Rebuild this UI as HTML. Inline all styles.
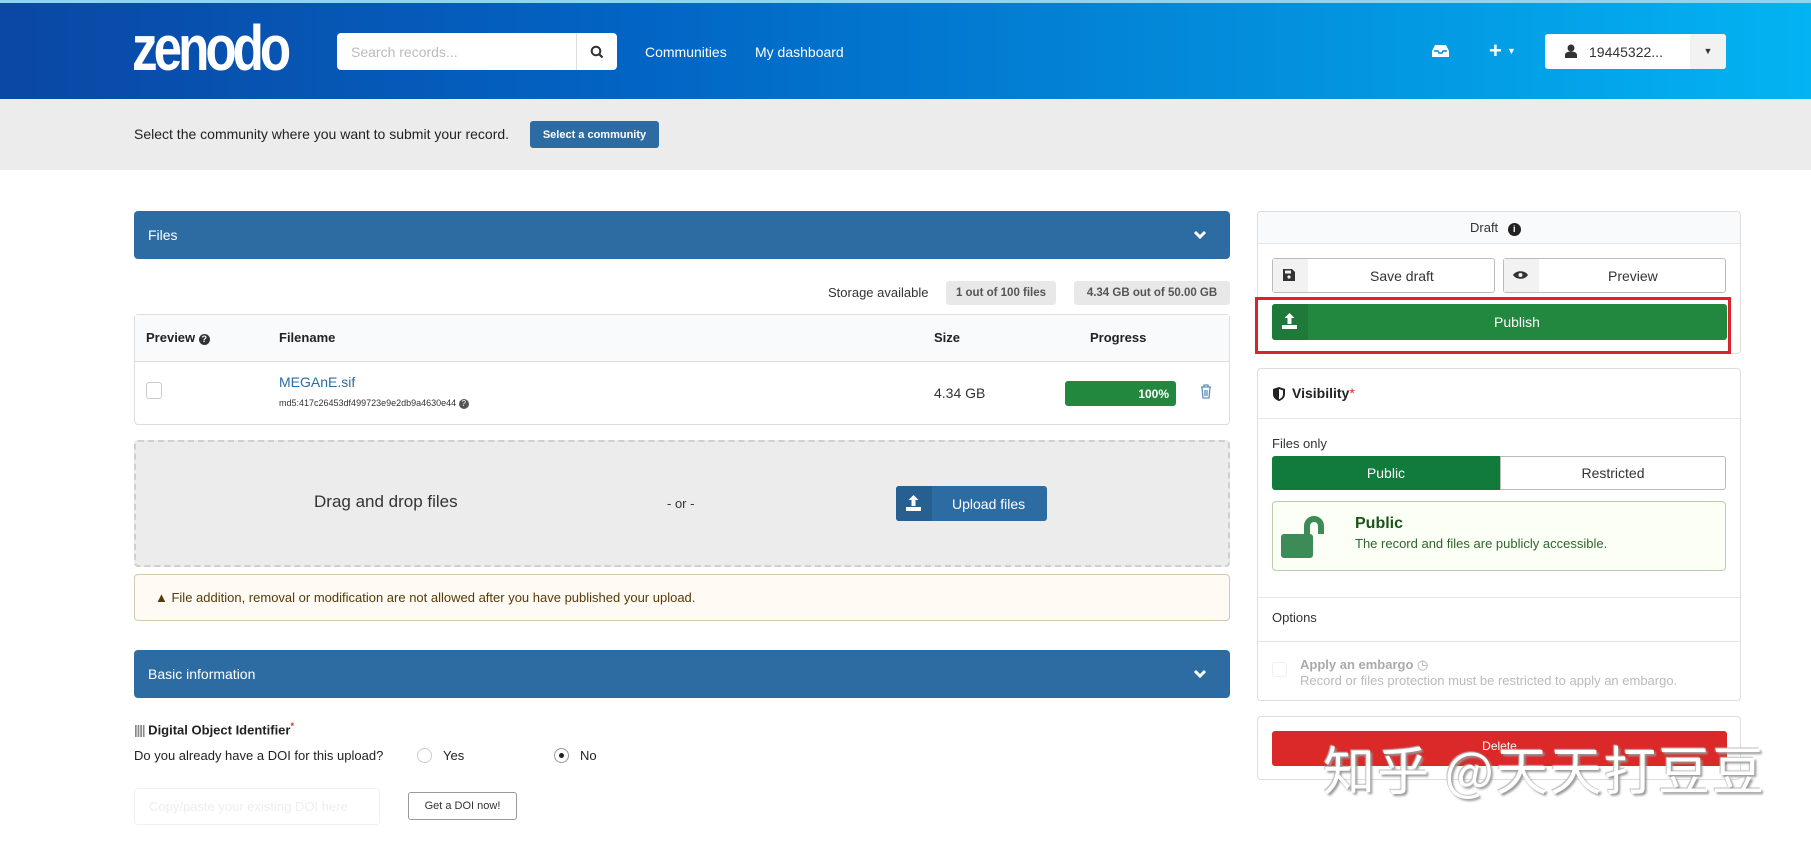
<!DOCTYPE html>
<html><head><meta charset="utf-8"><style>
*{box-sizing:border-box;margin:0;padding:0}
body{width:1811px;height:844px;overflow:hidden;background:#fff;font-family:"Liberation Sans",Arial,sans-serif;color:#222;position:relative;font-size:14px}
.a{position:absolute}
.hdr{left:0;top:0;width:1811px;height:99px;background:linear-gradient(90deg,#0b47a4 0%,#0264c4 35%,#0395e0 75%,#03b3f2 100%);border-top:3px solid #8fd3f5}
.bar{background:#2d6ca3;border-radius:4px;color:#fff;font-size:14px}
.btn{display:flex;align-items:center;justify-content:center}
</style></head><body>
<div class="a hdr"></div>
<div class="a" style="left:132px;top:16px;color:#fff;font-size:64px;font-weight:bold;letter-spacing:-5px;line-height:64px;transform:scaleX(0.8);transform-origin:0 0">zenodo</div>
<div class="a" style="left:337px;top:33px;width:239px;height:37px;background:#fff;border-radius:4px 0 0 4px;color:#bbb;font-size:14px;padding:11px 14px">Search records...</div>
<div class="a btn" style="left:576px;top:33px;width:41px;height:37px;background:#fff;border-left:1px solid #ddd;border-radius:0 4px 4px 0">
<svg width="14" height="14" viewBox="0 0 14 14"><circle cx="6" cy="6" r="4.3" fill="none" stroke="#333" stroke-width="2"/><path d="M9 9l3.5 3.5" stroke="#333" stroke-width="2.2"/></svg></div>
<div class="a" style="left:645px;top:44px;color:#fff;font-size:14px">Communities</div>
<div class="a" style="left:755px;top:44px;color:#fff;font-size:14px">My dashboard</div>
<svg class="a" style="left:1432px;top:44px" width="17" height="14" viewBox="0 0 17 14"><path d="M3 1h11l3 6v6H0V7z" fill="#fff"/><path d="M2 7h4l1 2h3l1-2h4" stroke="#0a86d6" stroke-width="1.4" fill="none"/></svg>
<div class="a" style="left:1489px;top:38px;color:#fff;font-size:22px;font-weight:bold">+</div>
<div class="a" style="left:1507px;top:46px;color:#fff;font-size:9px">▼</div>
<div class="a" style="left:1545px;top:34px;width:181px;height:35px;background:#fff;border-radius:3px"></div>
<div class="a" style="left:1690px;top:34px;width:36px;height:35px;background:#f2f2f2;border-radius:0 3px 3px 0;color:#333;font-size:9px;text-align:center;line-height:35px">▼</div>
<svg class="a" style="left:1565px;top:44px" width="12" height="14" viewBox="0 0 12 14"><circle cx="6" cy="4" r="3.5" fill="#333"/><path d="M0 14v-3c0-2 2-3.5 6-3.5s6 1.5 6 3.5v3z" fill="#333"/></svg>
<div class="a" style="left:1589px;top:44px;font-size:14px;color:#333">19445322...</div>

<div class="a" style="left:0;top:99px;width:1811px;height:71px;background:#ececec"></div>
<div class="a" style="left:134px;top:126px;font-size:14px;color:#222">Select the community where you want to submit your record.</div>
<div class="a btn" style="left:530px;top:121px;width:129px;height:27px;background:#2d6ca3;border-radius:3px;color:#fff;font-size:11px;font-weight:bold">Select a community</div>

<div class="a bar" style="left:134px;top:211px;width:1096px;height:48px;padding:16px 14px">Files</div>
<svg class="a" style="left:1193px;top:229px" width="14" height="12" viewBox="0 0 14 12"><path d="M2 3l5 5 5-5" stroke="#fff" stroke-width="3" fill="none"/></svg>
<div class="a" style="left:828px;top:285px;font-size:13px;color:#333">Storage available</div>
<div class="a btn" style="left:946px;top:281px;width:110px;height:24px;background:#e8e8e8;border-radius:3px;font-size:11.5px;color:#555;font-weight:bold">1 out of 100 files</div>
<div class="a btn" style="left:1074px;top:281px;width:156px;height:24px;background:#e8e8e8;border-radius:3px;font-size:11.5px;color:#555;font-weight:bold">4.34 GB out of 50.00 GB</div>

<div class="a" style="left:134px;top:314px;width:1096px;height:111px;border:1px solid #ddd;border-radius:4px"></div>
<div class="a" style="left:135px;top:315px;width:1094px;height:47px;background:#f9fafb;border-bottom:1px solid #ddd"></div>
<div class="a" style="left:146px;top:330px;font-weight:bold;font-size:13px">Preview <span style="display:inline-block;width:11px;height:11px;border-radius:50%;background:#333;color:#fff;font-size:9px;text-align:center;line-height:11px">?</span></div>
<div class="a" style="left:279px;top:330px;font-weight:bold;font-size:13px">Filename</div>
<div class="a" style="left:934px;top:330px;font-weight:bold;font-size:13px">Size</div>
<div class="a" style="left:1090px;top:330px;font-weight:bold;font-size:13px">Progress</div>
<div class="a" style="left:146px;top:382px;width:16px;height:17px;border:1px solid #ccc;border-radius:3px"></div>
<div class="a" style="left:279px;top:374px;font-size:14px;color:#2d6ca3">MEGAnE.sif</div>
<div class="a" style="left:279px;top:398px;font-size:9px;color:#333">md5:417c26453df499723e9e2db9a4630e44 <span style="display:inline-block;width:10px;height:10px;border-radius:50%;background:#555;color:#fff;font-size:8px;text-align:center;line-height:10px">?</span></div>
<div class="a" style="left:934px;top:385px;font-size:14px;color:#333">4.34 GB</div>
<div class="a" style="left:1065px;top:381px;width:111px;height:25px;background:#21883d;border-radius:3px;color:#fff;font-weight:bold;font-size:12px;text-align:right;padding:6px 7px">100%</div>
<svg class="a" style="left:1200px;top:384px" width="12" height="15" viewBox="0 0 12 15"><path d="M1 3h10M4 3V1h4v2M2 3l1 11h6l1-11M5 6v6M7 6v6" stroke="#5b8fc1" stroke-width="1.3" fill="none"/></svg>

<div class="a" style="left:134px;top:440px;width:1096px;height:127px;background:#ececec;border:2px dashed #cfcfcf;border-radius:4px"></div>
<div class="a" style="left:314px;top:492px;font-size:17px;color:#333">Drag and drop files</div>
<div class="a" style="left:667px;top:496px;font-size:13px;color:#333">- or -</div>
<div class="a" style="left:896px;top:486px;width:151px;height:35px;background:#2d6ca3;border-radius:3px"></div>
<div class="a" style="left:896px;top:486px;width:36px;height:35px;background:#285f91;border-radius:3px 0 0 3px"></div>
<svg class="a" style="left:906px;top:495px" width="15" height="16" viewBox="0 0 15 16"><path d="M7.5 0l5 5H9.5v6h-4V5h-3z M0 12h15v4H0z" fill="#fff"/></svg>
<div class="a" style="left:952px;top:496px;color:#fff;font-size:14px">Upload files</div>

<div class="a" style="left:134px;top:574px;width:1096px;height:47px;background:#fffaf3;border:1px solid #d6c9ad;border-radius:4px"></div>
<div class="a" style="left:155px;top:590px;font-size:13px;color:#573a08">▲ File addition, removal or modification are not allowed after you have published your upload.</div>

<div class="a bar" style="left:134px;top:650px;width:1096px;height:48px;padding:16px 14px">Basic information</div>
<svg class="a" style="left:1193px;top:668px" width="14" height="12" viewBox="0 0 14 12"><path d="M2 3l5 5 5-5" stroke="#fff" stroke-width="3" fill="none"/></svg>
<div class="a" style="left:134px;top:721px;font-size:13px;font-weight:bold;color:#222"><span style="color:#888;letter-spacing:-1px">||||</span> Digital Object Identifier<sup style="color:#db2828;font-size:9px">*</sup></div>
<div class="a" style="left:134px;top:748px;font-size:13px">Do you already have a DOI for this upload?</div>
<div class="a" style="left:417px;top:748px;width:15px;height:15px;border:1px solid #ccc;border-radius:50%"></div>
<div class="a" style="left:443px;top:748px;font-size:13px">Yes</div>
<div class="a" style="left:554px;top:748px;width:15px;height:15px;border:1px solid #999;border-radius:50%"><div style="width:5px;height:5px;background:#222;border-radius:50%;margin:4px"></div></div>
<div class="a" style="left:580px;top:748px;font-size:13px">No</div>
<div class="a" style="left:134px;top:788px;width:246px;height:37px;border:1px solid #f0f0f0;border-radius:4px;color:#eee;font-size:13px;padding:10px 14px">Copy/paste your existing DOI here</div>
<div class="a btn" style="left:408px;top:792px;width:109px;height:28px;border:1px solid #999;border-radius:3px;font-size:11px;color:#333">Get a DOI now!</div>

<!-- right -->
<div class="a" style="left:1257px;top:211px;width:484px;height:143px;border:1px solid #ddd;border-radius:4px"></div>
<div class="a" style="left:1258px;top:212px;width:482px;height:32px;background:#f9fafb;border-bottom:1px solid #e5e5e5;border-radius:4px 4px 0 0"></div>
<div class="a" style="left:1470px;top:220px;font-size:13px;color:#333">Draft <span style="display:inline-block;width:13px;height:13px;border-radius:50%;background:#222;color:#fff;font-size:9px;text-align:center;line-height:13px;font-weight:bold;margin-left:6px">i</span></div>
<div class="a" style="left:1272px;top:258px;width:223px;height:35px;border:1px solid #bbb;border-radius:3px;background:#fff"><div style="position:absolute;left:0;top:0;width:35px;height:33px;background:#f2f2f2"></div></div>
<svg class="a" style="left:1283px;top:269px" width="12" height="12" viewBox="0 0 12 12"><path d="M0 0h9l3 3v9H0z" fill="#333"/><rect x="2" y="1.5" width="6" height="3" fill="#f2f2f2"/><circle cx="6" cy="8" r="1.6" fill="#f2f2f2"/></svg>
<div class="a" style="left:1370px;top:268px;font-size:14px;color:#333">Save draft</div>
<div class="a" style="left:1503px;top:258px;width:223px;height:35px;border:1px solid #bbb;border-radius:3px;background:#fff"><div style="position:absolute;left:0;top:0;width:35px;height:33px;background:#f2f2f2"></div></div>
<svg class="a" style="left:1513px;top:270px" width="15" height="10" viewBox="0 0 15 10"><path d="M0 5C3 0 12 0 15 5 12 10 3 10 0 5z" fill="#333"/><circle cx="7.5" cy="5" r="2" fill="#f2f2f2"/></svg>
<div class="a" style="left:1608px;top:268px;font-size:14px;color:#333">Preview</div>
<div class="a" style="left:1272px;top:304px;width:455px;height:36px;background:#22873f;border-radius:3px"></div>
<div class="a" style="left:1272px;top:304px;width:36px;height:36px;background:#1f7a39;border-radius:3px 0 0 3px"></div>
<svg class="a" style="left:1282px;top:313px" width="15" height="16" viewBox="0 0 15 16"><path d="M7.5 0l5 5H9.5v6h-4V5h-3z M0 12h15v4H0z" fill="#fff"/></svg>
<div class="a" style="left:1494px;top:314px;color:#fff;font-size:14px">Publish</div>
<div class="a" style="left:1255px;top:297px;width:476px;height:57px;border:3px solid #d9232d"></div>

<div class="a" style="left:1257px;top:368px;width:484px;height:333px;border:1px solid #ddd;border-radius:4px"></div>
<svg class="a" style="left:1273px;top:387px" width="12" height="14" viewBox="0 0 12 14"><path d="M6 0l6 2v5c0 4-3 6-6 7-3-1-6-3-6-7V2z" fill="#222"/><path d="M6 2l4 1.5V7c0 3-2 4.5-4 5.2z" fill="#fff"/></svg>
<div class="a" style="left:1292px;top:385px;font-size:14px;font-weight:bold;color:#222">Visibility<span style="color:#db2828;font-weight:normal">*</span></div>
<div class="a" style="left:1258px;top:418px;width:482px;height:1px;background:#e5e5e5"></div>
<div class="a" style="left:1272px;top:436px;font-size:13px;color:#333">Files only</div>
<div class="a btn" style="left:1272px;top:456px;width:228px;height:34px;background:#107b3b;color:#fff;font-size:14px;border-radius:3px 0 0 3px">Public</div>
<div class="a btn" style="left:1500px;top:456px;width:226px;height:34px;border:1px solid #bbb;border-radius:0 3px 3px 0;font-size:14px;color:#333">Restricted</div>
<div class="a" style="left:1272px;top:501px;width:454px;height:70px;background:#fcfff5;border:1px solid #b8d0a8;border-radius:4px"></div>
<svg class="a" style="left:1281px;top:514px" width="46" height="44" viewBox="0 0 46 44"><path d="M26 20V12a7 7 0 0 1 14 0v8" stroke="#3d8b56" stroke-width="6" fill="none"/><rect x="0" y="20" width="32" height="24" rx="3" fill="#3d8b56"/></svg>
<div class="a" style="left:1355px;top:515px;font-size:16px;font-weight:bold;color:#1a531b">Public</div>
<div class="a" style="left:1355px;top:536px;font-size:13px;color:#2c662d">The record and files are publicly accessible.</div>
<div class="a" style="left:1258px;top:597px;width:482px;height:1px;background:#e5e5e5"></div>
<div class="a" style="left:1272px;top:610px;font-size:13px;color:#333">Options</div>
<div class="a" style="left:1258px;top:641px;width:482px;height:1px;background:#e5e5e5"></div>
<div class="a" style="left:1272px;top:662px;width:15px;height:15px;border:1px solid #f0f0f0;border-radius:3px"></div>
<div class="a" style="left:1300px;top:657px;font-size:13px;color:#aaa;font-weight:bold">Apply an embargo <span style="font-weight:normal">◷</span></div>
<div class="a" style="left:1300px;top:673px;font-size:13px;color:#bbb">Record or files protection must be restricted to apply an embargo.</div>

<div class="a" style="left:1257px;top:716px;width:484px;height:64px;border:1px solid #ddd;border-radius:4px"></div>
<div class="a" style="left:1272px;top:731px;width:455px;height:35px;background:#db2828;border-radius:3px;color:#fff;font-size:12px;text-align:center;padding-top:8px">Delete</div>
<div class="a" style="left:1323px;top:730px;font-family:'Noto Sans CJK SC',sans-serif;font-size:52px;color:#fff;text-shadow:2px 2px 2px #999,-1px -1px 1px #bbb;letter-spacing:2px;white-space:nowrap">知乎 @天天打豆豆</div>
</body></html>
